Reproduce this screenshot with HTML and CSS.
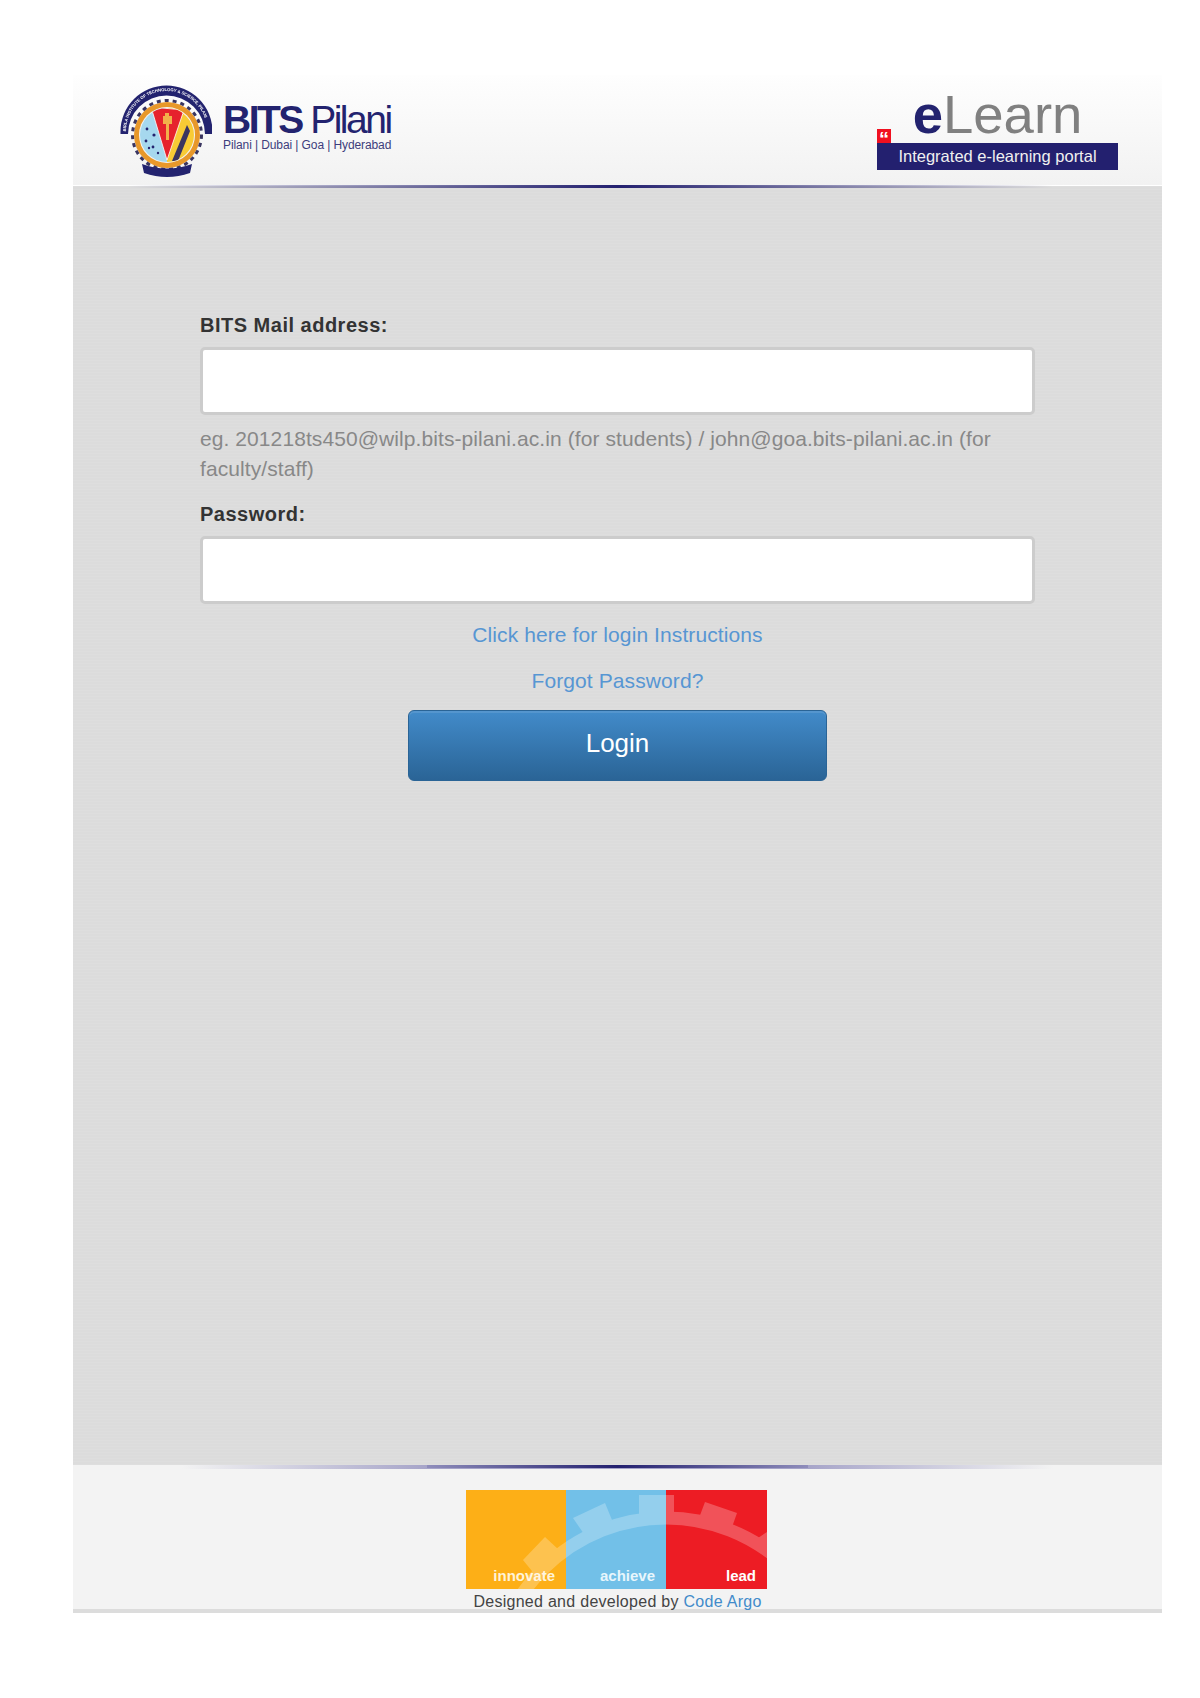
FILE: index.html
```html
<!DOCTYPE html>
<html lang="en">
<head>
    <meta charset="UTF-8">
    <meta name="viewport" content="width=device-width, initial-scale=1.0">
    <title>BITS Pilani eLearn</title>
    <link rel="stylesheet" href="styles.css">
</head>
<body>
    <div class="wrapper">
        <div class="header">
            <div class="brand">
                <svg class="seal" viewBox="0 0 92 92" aria-hidden="true">
                    <defs>
                        <path id="sealArc" d="M6 46.5 A40.5 40.5 0 1 1 87 46.5"></path>
                        <clipPath id="sealInner"><circle cx="47" cy="50" r="27"></circle></clipPath>
                    </defs>
                    <path d="M0.5 46.5 A46 46 0 1 1 92.5 46.5 L92.5 49 L85 49 A38.5 38.5 0 1 0 8 49 L0.5 49 Z" fill="#23236f"></path>
                    <text class="seal-text"><textPath href="#sealArc">BIRLA INSTITUTE OF TECHNOLOGY &amp; SCIENCE, PILANI</textPath></text>
                    <circle cx="47" cy="50" r="33" fill="#e8982a"></circle>
                    <circle cx="47" cy="50" r="34.5" fill="none" stroke="#3a3560" stroke-width="3" stroke-dasharray="4 4"></circle>
                    <circle cx="47" cy="50" r="28" fill="#f4f4f4"></circle>
                    <g clip-path="url(#sealInner)">
                        <path d="M47 20 L18 20 L18 80 L47 80 Z" fill="#a6d8ee"></path>
                        <path d="M47 20 L78 20 L78 80 L47 80 Z" fill="#f8cb35"></path>
                        <path d="M31 22 L64 25 L47 75 Z" fill="#e6222d" stroke="#fff" stroke-width="0.8"></path>
                        <path d="M67 40 L52 76 L58 76 L70 46 Z" fill="#3a3560"></path>
                        <g fill="#23236f">
                            <circle cx="27" cy="44" r="1.4"></circle>
                            <circle cx="34" cy="50" r="1.6"></circle>
                            <circle cx="26" cy="56" r="1.4"></circle>
                            <circle cx="33" cy="62" r="1.4"></circle>
                            <circle cx="38" cy="68" r="1.2"></circle>
                            <circle cx="29" cy="63" r="1.2"></circle>
                        </g>
                        <path d="M45 28 h4 v3 h3 v8 h-3 v16 h-3 v-16 h-3 v-8 h2 Z" fill="#f2b04a"></path>
                    </g>
                    <path d="M22 79 Q47 88 72 79 L70 88 Q47 96 24 88 Z" fill="#23236f"></path>
                </svg>
                <div class="brand-text">
                    <div class="brand-name"><b>BITS</b> Pilani</div>
                    <div class="brand-places">Pilani | Dubai | Goa | Hyderabad</div>
                </div>
            </div>
            <div class="elearn">
                <div class="elearn-name"><b>e</b>Learn</div>
                <div class="elearn-bar">
                    <span class="quote-mark">“</span>
                    Integrated e-learning portal
                </div>
            </div>
        </div>
        <div class="rule"></div>

        <div class="content">
            <form class="login-form" action="#" method="post">
                <label for="email">BITS Mail address:</label>
                <input type="text" id="email" name="email">
                <p class="hint">eg. 201218ts450@wilp.bits-pilani.ac.in (for students) / john@goa.bits-pilani.ac.in (for faculty/staff)</p>
                <label for="password">Password:</label>
                <input type="password" id="password" name="password">
                <a class="form-link" href="#">Click here for login Instructions</a>
                <a class="form-link" href="#">Forgot Password?</a>
                <button type="submit">Login</button>
            </form>
        </div>

        <div class="footer">
            <div class="footer-rule"></div>
            <div class="banner">
                <div class="panel orange">innovate</div>
                <div class="panel blue">achieve</div>
                <div class="panel red">lead</div>
                <svg class="banner-gear" viewBox="0 0 301 99" aria-hidden="true">
                    <g opacity="0.24" fill="#fff">
                        <circle cx="200" cy="202" r="174" fill="none" stroke="#fff" stroke-width="13"></circle>
                        <polygon points="173,5 208,5 208,26 173,26"></polygon>
                        <polygon points="107,28 139,13 146,30 118,44"></polygon>
                        <polygon points="57,70 79,47 93,60 70,86"></polygon>
                        <polygon points="239,12 271,23 265,40 233,28"></polygon>
                        <polygon points="301,42 301,62 286,52"></polygon>
                    </g>
                </svg>
            </div>
            <div class="credit">Designed and developed by <a href="#">Code Argo</a></div>
        </div>
    </div>
</body>
</html>
```

FILE: styles.css
```css
body {
    font-family: "Liberation Sans", Arial, sans-serif;
    margin: 0;
    padding-top: 75px;
    background-color: #fff;
}

.wrapper {
    width: 1089px;
    margin-left: 73px;
}

.header {
    height: 110px;
    display: flex;
    justify-content: space-between;
    background: linear-gradient(#fefefe, #f2f2f2);
}

.brand {
    display: flex;
    margin-left: 47px;
    padding-top: 10px;
}

.seal {
    width: 92px;
    height: 92px;
    filter: blur(0.4px);
}

.seal-text {
    font-size: 4.2px;
    font-weight: bold;
    fill: #fff;
}

.brand-text {
    margin-left: 11px;
    padding-top: 15px;
    color: #23236f;
}

.brand-name {
    font-size: 39px;
    line-height: 40px;
    letter-spacing: -2.5px;
    white-space: nowrap;
}

.brand-places {
    font-size: 12px;
    line-height: 14px;
    margin-top: -2px;
    letter-spacing: -0.1px;
    color: #3d3d7c;
    white-space: nowrap;
}

.elearn {
    width: 241px;
    margin-right: 44px;
    padding-top: 12px;
}

.elearn-name {
    font-size: 54.5px;
    line-height: 56px;
    color: #808080;
    text-align: center;
}

.elearn-name b {
    color: #23236f;
}

.elearn-bar {
    position: relative;
    height: 27px;
    line-height: 27px;
    background-color: #23206f;
    color: #f0f0f0;
    font-size: 16.5px;
    text-align: center;
}

.quote-mark {
    position: absolute;
    left: 0;
    top: -14px;
    width: 14px;
    height: 14px;
    background-color: #f01020;
    color: #fff;
    font-size: 20px;
    line-height: 20px;
    font-weight: bold;
    text-align: center;
}

.rule {
    height: 3px;
    margin-bottom: -2px;
    position: relative;
    background: linear-gradient(to right, rgba(35, 32, 111, 0) 5%, #23206f 50%, rgba(35, 32, 111, 0) 90%);
}

.content {
    height: 1279px;
    background-color: #dcdcdc;
    background-image: repeating-linear-gradient(0deg, rgba(255, 255, 255, 0.06) 0 1px, transparent 1px 3px);
}

.login-form {
    width: 835px;
    margin-left: 127px;
    padding-top: 127px;
    display: flex;
    flex-direction: column;
}

label {
    font-size: 20px;
    line-height: 24px;
    font-weight: bold;
    letter-spacing: 0.5px;
    color: #333;
    margin-bottom: 10px;
}

input {
    flex: none;
    height: 68px;
    box-sizing: border-box;
    border: 3px solid #ccc;
    border-radius: 5px;
    background-color: #fff;
}

.hint {
    margin: 9px 0 18px;
    font-size: 21px;
    line-height: 30px;
    letter-spacing: 0.08px;
    color: #888;
}

.form-link {
    font-size: 21px;
    line-height: 30px;
    letter-spacing: 0.1px;
    color: #5796d3;
    text-decoration: none;
    text-align: center;
    margin-top: 16px;
}

button {
    font-family: "Liberation Sans", Arial, sans-serif;
    flex: none;
    width: 419px;
    height: 71px;
    align-self: center;
    margin-top: 14px;
    padding: 0 0 4px;
    border: 1px solid #2a6496;
    border-radius: 6px;
    background: linear-gradient(#428bca, #2a6496);
    box-shadow: inset 0 2px 0 rgba(255, 255, 255, 0.1);
    color: #fff;
    font-size: 26px;
}

.footer {
    position: relative;
    height: 148px;
    box-sizing: border-box;
    padding-top: 25px;
    background-color: #f3f3f3;
    border-bottom: 4px solid #dcdcdc;
    display: flex;
    flex-direction: column;
    align-items: center;
}

.footer-rule {
    position: absolute;
    top: 0;
    left: 0;
    right: 0;
    height: 4px;
    background:
        linear-gradient(to right, #8f8dbb, #23206f 50%, #8f8dbb) center top / 381px 3px no-repeat,
        linear-gradient(to right, rgba(165, 163, 200, 0) 10%, #a5a3c8 33%, #a5a3c8 67%, rgba(165, 163, 200, 0) 90%);
}

.banner {
    position: relative;
    display: flex;
    flex: none;
    width: 301px;
    height: 99px;
    margin-left: -2px;
    overflow: hidden;
}

.banner-gear {
    position: absolute;
    top: 0;
    left: 0;
    width: 301px;
    height: 99px;
}

.panel {
    width: 100px;
    box-sizing: border-box;
    padding: 76px 11px 0 0;
    text-align: right;
    color: #fff;
    font-size: 15px;
    font-weight: bold;
    line-height: 20px;
}

.panel.orange {
    background-color: #fdaf17;
    color: #fff3d8;
}

.panel.blue {
    background-color: #72c0e8;
    color: #e8f6fc;
}

.panel.red {
    width: 101px;
    background-color: #ed1c24;
}

.credit {
    margin-top: 4px;
    font-size: 16px;
    line-height: 18px;
    letter-spacing: 0.28px;
    color: #444;
    white-space: nowrap;
}

.credit a {
    color: #428bca;
    text-decoration: none;
}
```
